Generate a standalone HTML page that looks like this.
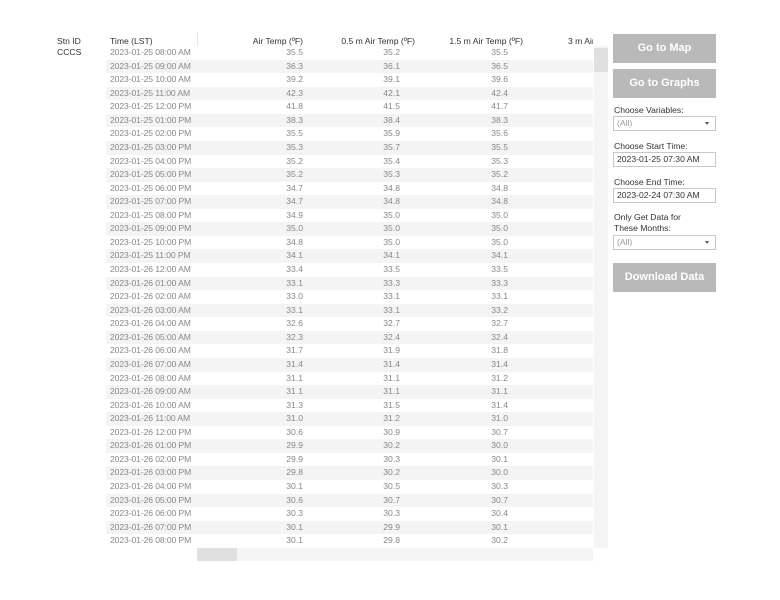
<!DOCTYPE html>
<html><head><meta charset="utf-8"><style>
*{margin:0;padding:0;box-sizing:border-box}
body{width:780px;height:600px;background:#fff;font-family:"Liberation Sans",sans-serif;position:relative;overflow:hidden}
.h{position:absolute;top:36px;font-size:8.6px;color:#333;white-space:nowrap}
#rows{position:absolute;left:106px;top:46px;width:487px}
.r{height:13.57px;position:relative;font-size:8.6px;color:#888;line-height:13.57px}
.r:nth-child(even) .t,.r:nth-child(even) .d{background:#f4f4f4}
.t{position:absolute;left:0;width:91px;height:100%;padding-left:4px;white-space:nowrap;letter-spacing:-0.1px}
.d{position:absolute;left:91px;width:396px;height:100%}
.d span{position:absolute;text-align:right;width:40px}
.a{left:66px}.b{left:163px}.c{left:271px}
.btn{position:absolute;left:613px;width:103px;height:29px;background:#b9b9b9;color:#fff;font-weight:bold;font-size:11px;text-align:center;line-height:29px}
.lb{position:absolute;left:614px;font-size:8.6px;color:#333;line-height:11px}
.in{position:absolute;left:613px;width:103px;height:15px;border:1px solid #c8c8c8;font-size:8.6px;color:#333;line-height:13px;padding-left:3px}
.in.g{color:#999}
.arr{position:absolute;right:6px;top:5px;width:0;height:0;border-left:2.5px solid transparent;border-right:2.5px solid transparent;border-top:3px solid #555}
</style></head><body>
<div class="h" style="left:57px">Stn ID</div>
<div class="h" style="left:110px">Time (LST)</div>
<div class="h" style="left:203px;width:100px;text-align:right">Air Temp (ºF)</div>
<div class="h" style="left:305px;width:110px;text-align:right">0.5 m Air Temp (ºF)</div>
<div class="h" style="left:413px;width:110px;text-align:right">1.5 m Air Temp (ºF)</div>
<div class="h" style="left:568px;width:25px;overflow:hidden">3 m Air</div>
<div style="position:absolute;left:197px;top:32px;width:1px;height:14px;background:#e6e6e6"></div>
<div style="position:absolute;left:57px;top:46px;font-size:8.6px;color:#333;line-height:13.57px">CCCS</div>
<div style="position:absolute;left:594px;top:46px;width:14px;height:502px;background:#f5f5f5"></div>
<div style="position:absolute;left:594px;top:48px;width:14px;height:24px;background:#e0e0e0"></div>
<div style="position:absolute;left:197px;top:548px;width:396px;height:13px;background:#f5f5f5"></div>
<div style="position:absolute;left:197px;top:548px;width:40px;height:13px;background:#e0e0e0"></div>
<div id="rows">
<div class="r"><div class="t">2023-01-25 08:00 AM</div><div class="d"><span class="a">35.5</span><span class="b">35.2</span><span class="c">35.5</span></div></div>
<div class="r"><div class="t">2023-01-25 09:00 AM</div><div class="d"><span class="a">36.3</span><span class="b">36.1</span><span class="c">36.5</span></div></div>
<div class="r"><div class="t">2023-01-25 10:00 AM</div><div class="d"><span class="a">39.2</span><span class="b">39.1</span><span class="c">39.6</span></div></div>
<div class="r"><div class="t">2023-01-25 11:00 AM</div><div class="d"><span class="a">42.3</span><span class="b">42.1</span><span class="c">42.4</span></div></div>
<div class="r"><div class="t">2023-01-25 12:00 PM</div><div class="d"><span class="a">41.8</span><span class="b">41.5</span><span class="c">41.7</span></div></div>
<div class="r"><div class="t">2023-01-25 01:00 PM</div><div class="d"><span class="a">38.3</span><span class="b">38.4</span><span class="c">38.3</span></div></div>
<div class="r"><div class="t">2023-01-25 02:00 PM</div><div class="d"><span class="a">35.5</span><span class="b">35.9</span><span class="c">35.6</span></div></div>
<div class="r"><div class="t">2023-01-25 03:00 PM</div><div class="d"><span class="a">35.3</span><span class="b">35.7</span><span class="c">35.5</span></div></div>
<div class="r"><div class="t">2023-01-25 04:00 PM</div><div class="d"><span class="a">35.2</span><span class="b">35.4</span><span class="c">35.3</span></div></div>
<div class="r"><div class="t">2023-01-25 05:00 PM</div><div class="d"><span class="a">35.2</span><span class="b">35.3</span><span class="c">35.2</span></div></div>
<div class="r"><div class="t">2023-01-25 06:00 PM</div><div class="d"><span class="a">34.7</span><span class="b">34.8</span><span class="c">34.8</span></div></div>
<div class="r"><div class="t">2023-01-25 07:00 PM</div><div class="d"><span class="a">34.7</span><span class="b">34.8</span><span class="c">34.8</span></div></div>
<div class="r"><div class="t">2023-01-25 08:00 PM</div><div class="d"><span class="a">34.9</span><span class="b">35.0</span><span class="c">35.0</span></div></div>
<div class="r"><div class="t">2023-01-25 09:00 PM</div><div class="d"><span class="a">35.0</span><span class="b">35.0</span><span class="c">35.0</span></div></div>
<div class="r"><div class="t">2023-01-25 10:00 PM</div><div class="d"><span class="a">34.8</span><span class="b">35.0</span><span class="c">35.0</span></div></div>
<div class="r"><div class="t">2023-01-25 11:00 PM</div><div class="d"><span class="a">34.1</span><span class="b">34.1</span><span class="c">34.1</span></div></div>
<div class="r"><div class="t">2023-01-26 12:00 AM</div><div class="d"><span class="a">33.4</span><span class="b">33.5</span><span class="c">33.5</span></div></div>
<div class="r"><div class="t">2023-01-26 01:00 AM</div><div class="d"><span class="a">33.1</span><span class="b">33.3</span><span class="c">33.3</span></div></div>
<div class="r"><div class="t">2023-01-26 02:00 AM</div><div class="d"><span class="a">33.0</span><span class="b">33.1</span><span class="c">33.1</span></div></div>
<div class="r"><div class="t">2023-01-26 03:00 AM</div><div class="d"><span class="a">33.1</span><span class="b">33.1</span><span class="c">33.2</span></div></div>
<div class="r"><div class="t">2023-01-26 04:00 AM</div><div class="d"><span class="a">32.6</span><span class="b">32.7</span><span class="c">32.7</span></div></div>
<div class="r"><div class="t">2023-01-26 05:00 AM</div><div class="d"><span class="a">32.3</span><span class="b">32.4</span><span class="c">32.4</span></div></div>
<div class="r"><div class="t">2023-01-26 06:00 AM</div><div class="d"><span class="a">31.7</span><span class="b">31.9</span><span class="c">31.8</span></div></div>
<div class="r"><div class="t">2023-01-26 07:00 AM</div><div class="d"><span class="a">31.4</span><span class="b">31.4</span><span class="c">31.4</span></div></div>
<div class="r"><div class="t">2023-01-26 08:00 AM</div><div class="d"><span class="a">31.1</span><span class="b">31.1</span><span class="c">31.2</span></div></div>
<div class="r"><div class="t">2023-01-26 09:00 AM</div><div class="d"><span class="a">31.1</span><span class="b">31.1</span><span class="c">31.1</span></div></div>
<div class="r"><div class="t">2023-01-26 10:00 AM</div><div class="d"><span class="a">31.3</span><span class="b">31.5</span><span class="c">31.4</span></div></div>
<div class="r"><div class="t">2023-01-26 11:00 AM</div><div class="d"><span class="a">31.0</span><span class="b">31.2</span><span class="c">31.0</span></div></div>
<div class="r"><div class="t">2023-01-26 12:00 PM</div><div class="d"><span class="a">30.6</span><span class="b">30.9</span><span class="c">30.7</span></div></div>
<div class="r"><div class="t">2023-01-26 01:00 PM</div><div class="d"><span class="a">29.9</span><span class="b">30.2</span><span class="c">30.0</span></div></div>
<div class="r"><div class="t">2023-01-26 02:00 PM</div><div class="d"><span class="a">29.9</span><span class="b">30.3</span><span class="c">30.1</span></div></div>
<div class="r"><div class="t">2023-01-26 03:00 PM</div><div class="d"><span class="a">29.8</span><span class="b">30.2</span><span class="c">30.0</span></div></div>
<div class="r"><div class="t">2023-01-26 04:00 PM</div><div class="d"><span class="a">30.1</span><span class="b">30.5</span><span class="c">30.3</span></div></div>
<div class="r"><div class="t">2023-01-26 05:00 PM</div><div class="d"><span class="a">30.6</span><span class="b">30.7</span><span class="c">30.7</span></div></div>
<div class="r"><div class="t">2023-01-26 06:00 PM</div><div class="d"><span class="a">30.3</span><span class="b">30.3</span><span class="c">30.4</span></div></div>
<div class="r"><div class="t">2023-01-26 07:00 PM</div><div class="d"><span class="a">30.1</span><span class="b">29.9</span><span class="c">30.1</span></div></div>
<div class="r"><div class="t">2023-01-26 08:00 PM</div><div class="d"><span class="a">30.1</span><span class="b">29.8</span><span class="c">30.2</span></div></div>
</div>
<div class="btn" style="top:34px">Go to Map</div>
<div class="btn" style="top:69px">Go to Graphs</div>
<div class="lb" style="top:105px">Choose Variables:</div>
<div class="in g" style="top:116px">(All)<div class="arr"></div></div>
<div class="lb" style="top:141px">Choose Start Time:</div>
<div class="in" style="top:152px">2023-01-25 07:30 AM</div>
<div class="lb" style="top:177px">Choose End Time:</div>
<div class="in" style="top:188px">2023-02-24 07:30 AM</div>
<div class="lb" style="top:212px">Only Get Data for<br>These Months:</div>
<div class="in g" style="top:235px">(All)<div class="arr"></div></div>
<div class="btn" style="top:263px">Download Data</div>
</body></html>
